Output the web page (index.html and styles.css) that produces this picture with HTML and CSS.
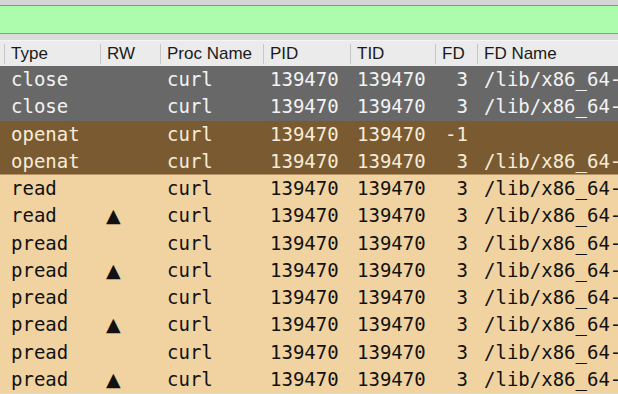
FILE: index.html
```html
<!DOCTYPE html>
<html lang="en">
<head>
    <meta charset="UTF-8">
    <meta name="viewport" content="width=device-width, initial-scale=1.0">
    <title>Syscall Trace</title>
    <link rel="stylesheet" href="styles.css">
</head>
<body>
    <div class="toolbar"></div>
    <div class="filter-bar"></div>
    <div class="spacer"></div>

    <div class="trace">
        <div class="row header">
            <div class="cell"></div>
            <div class="cell">Type</div>
            <div class="cell">RW</div>
            <div class="cell">Proc Name</div>
            <div class="cell">PID</div>
            <div class="cell">TID</div>
            <div class="cell">FD</div>
            <div class="cell">FD Name</div>
        </div>

        <div class="row ev-close">
            <div class="cell"></div><div class="cell">close</div><div class="cell"></div><div class="cell">curl</div>
            <div class="cell">139470</div><div class="cell">139470</div><div class="cell fd">3</div><div class="cell">/lib/x86_64-linux-gnu/libc.so.6</div>
        </div>
        <div class="row ev-close">
            <div class="cell"></div><div class="cell">close</div><div class="cell"></div><div class="cell">curl</div>
            <div class="cell">139470</div><div class="cell">139470</div><div class="cell fd">3</div><div class="cell">/lib/x86_64-linux-gnu/libc.so.6</div>
        </div>
        <div class="row ev-open">
            <div class="cell"></div><div class="cell">openat</div><div class="cell"></div><div class="cell">curl</div>
            <div class="cell">139470</div><div class="cell">139470</div><div class="cell fd">-1</div><div class="cell"></div>
        </div>
        <div class="row ev-open last">
            <div class="cell"></div><div class="cell">openat</div><div class="cell"></div><div class="cell">curl</div>
            <div class="cell">139470</div><div class="cell">139470</div><div class="cell fd">3</div><div class="cell">/lib/x86_64-linux-gnu/libc.so.6</div>
        </div>
        <div class="row ev-io">
            <div class="cell"></div><div class="cell">read</div><div class="cell"></div><div class="cell">curl</div>
            <div class="cell">139470</div><div class="cell">139470</div><div class="cell fd">3</div><div class="cell">/lib/x86_64-linux-gnu/libc.so.6</div>
        </div>
        <div class="row ev-io">
            <div class="cell"></div><div class="cell">read</div><div class="cell rw">&#9650;</div><div class="cell">curl</div>
            <div class="cell">139470</div><div class="cell">139470</div><div class="cell fd">3</div><div class="cell">/lib/x86_64-linux-gnu/libc.so.6</div>
        </div>
        <div class="row ev-io">
            <div class="cell"></div><div class="cell">pread</div><div class="cell"></div><div class="cell">curl</div>
            <div class="cell">139470</div><div class="cell">139470</div><div class="cell fd">3</div><div class="cell">/lib/x86_64-linux-gnu/libc.so.6</div>
        </div>
        <div class="row ev-io">
            <div class="cell"></div><div class="cell">pread</div><div class="cell rw">&#9650;</div><div class="cell">curl</div>
            <div class="cell">139470</div><div class="cell">139470</div><div class="cell fd">3</div><div class="cell">/lib/x86_64-linux-gnu/libc.so.6</div>
        </div>
        <div class="row ev-io">
            <div class="cell"></div><div class="cell">pread</div><div class="cell"></div><div class="cell">curl</div>
            <div class="cell">139470</div><div class="cell">139470</div><div class="cell fd">3</div><div class="cell">/lib/x86_64-linux-gnu/libc.so.6</div>
        </div>
        <div class="row ev-io">
            <div class="cell"></div><div class="cell">pread</div><div class="cell rw">&#9650;</div><div class="cell">curl</div>
            <div class="cell">139470</div><div class="cell">139470</div><div class="cell fd">3</div><div class="cell">/lib/x86_64-linux-gnu/libc.so.6</div>
        </div>
        <div class="row ev-io">
            <div class="cell"></div><div class="cell">pread</div><div class="cell"></div><div class="cell">curl</div>
            <div class="cell">139470</div><div class="cell">139470</div><div class="cell fd">3</div><div class="cell">/lib/x86_64-linux-gnu/libc.so.6</div>
        </div>
        <div class="row ev-io">
            <div class="cell"></div><div class="cell">pread</div><div class="cell rw">&#9650;</div><div class="cell">curl</div>
            <div class="cell">139470</div><div class="cell">139470</div><div class="cell fd">3</div><div class="cell">/lib/x86_64-linux-gnu/libc.so.6</div>
        </div>
    </div>
</body>
</html>
```

FILE: styles.css
```css
* {
    margin: 0;
    padding: 0;
    box-sizing: border-box;
}

html, body {
    width: 618px;
    height: 394px;
    overflow: hidden;
}

body {
    background: #dadada;
    font-family: 'Liberation Sans', Arial, sans-serif;
    color: #111111;
}

.toolbar {
    height: 6px;
    background: #d6d6d6;
    border-bottom: 1px solid #8e8e8e;
}

.filter-bar {
    height: 28px;
    background: #adfcad;
    border-bottom: 1px solid #8f9c8f;
}

.spacer {
    height: 6px;
    background: #dcdcdc;
}

.trace {
    width: 618px;
    overflow: hidden;
}

.row {
    display: grid;
    grid-template-columns: 4px 96px 60px 103px 87px 85px 42px 300px;
    height: 27.25px;
    white-space: nowrap;
    font-family: 'DejaVu Sans Mono', 'Liberation Mono', monospace;
    font-size: 19px;
    line-height: 26px;
}

.cell {
    padding-left: 7px;
    overflow: hidden;
}

.cell.fd {
    text-align: right;
    padding-right: 9px;
}

.cell.rw {
    font-family: 'DejaVu Sans', sans-serif;
    font-size: 19px;
    padding-left: 6px;
}

/* column header */
.header {
    height: 26px;
    background: #ebebeb;
    border-top: 1px solid #f6f6f6;
    font-family: 'Liberation Sans', Arial, sans-serif;
    font-size: 17px;
    line-height: 24px;
    color: #1a1a1a;
    align-items: center;
}

.header .cell {
    position: relative;
}

.header .cell + .cell::before {
    content: "";
    position: absolute;
    left: 0;
    top: 2px;
    bottom: 2px;
    width: 1px;
    background: #c6c6c6;
}

.header .cell:first-child::after {
    content: "";
    position: absolute;
    right: 1px;
    top: 2px;
    bottom: 2px;
    width: 1px;
    background: #c6c6c6;
}

/* event colours */
.ev-close {
    background: #686868;
    color: #f3f3f3;
}

.ev-open {
    background: #7a5b31;
    color: #f7ecd9;
}

.ev-open.last {
    border-bottom: 1px solid #b69466;
}

.ev-io {
    background: #f0d3a1;
    color: #111111;
}
```
